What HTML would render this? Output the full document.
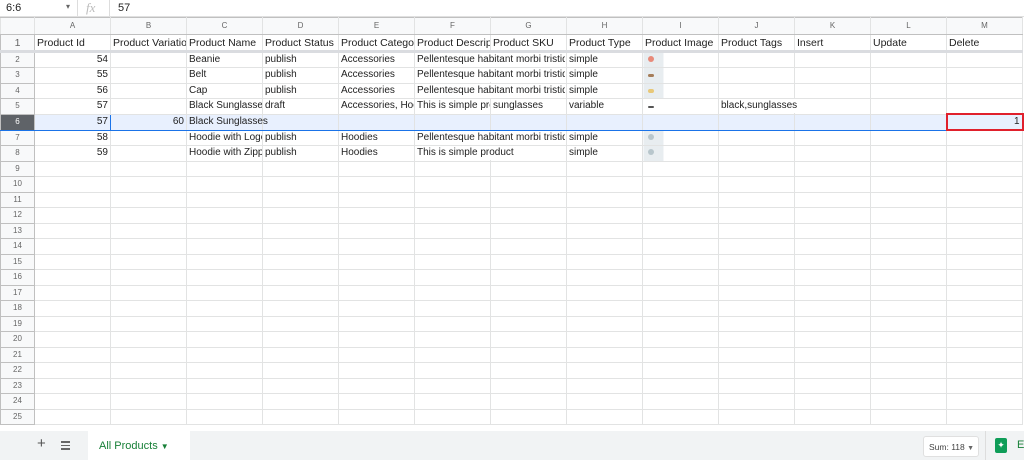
<!DOCTYPE html><html><head><style>
*{box-sizing:border-box;margin:0;padding:0}
body{width:1024px;height:460px;overflow:hidden;background:#fff;font-family:"Liberation Sans",Arial,sans-serif;position:relative}
.fb{position:absolute;left:0;top:0;width:1024px;height:17px;border-bottom:1px solid #e0e0e0;font-size:11px;color:#222}
table{position:absolute;top:17px;left:0;width:1022px;border-collapse:collapse;table-layout:fixed;font-size:10px;color:#222}
td{border:1px solid #e2e3e3;white-space:nowrap;overflow:hidden;padding:0 2px;height:15.5px;line-height:14px}
td.rh{background:#f8f9fa;color:#666;text-align:center;font-size:8px;border-color:#c0c0c0;border-top-color:#e2e3e3}
tr.ch td{background:#f8f9fa;color:#666;text-align:center;font-size:8px;height:17px;border-color:#c0c0c0 #e2e3e3}
tr.r1 td{height:17px;font-size:10.5px;border-bottom:3px solid #dadce0}
.n{text-align:right}
.img{background:linear-gradient(90deg,#e8edf0 0,#e8edf0 20px,#fff 20px)}
tr.sel td{background:#e8f0fe;border-top:1px solid #1a73e8;border-bottom:1px solid #1a73e8}
tr.sel td.rh{background:#5f6368;color:#fff}
.dot{display:inline-block;width:6px;height:6px;border-radius:3px;margin-left:3px}
.bot{position:absolute;left:0;top:431px;width:1024px;height:29px;background:#f1f3f4}
td.ov{overflow:visible}
td.ov span{display:block;width:148px;overflow:hidden;position:relative;background:#fff}
td.nb{border-left-color:#fff}
</style></head><body>
<div class="fb"><span style="position:absolute;left:6px;top:2px">6:6</span><span style="position:absolute;left:66px;top:2px;font-size:8px;color:#666">▾</span><span style="position:absolute;left:77px;top:0;width:1px;height:16px;background:#ddd"></span><span style="position:absolute;left:86px;top:0;font-family:'Liberation Serif';font-style:italic;color:#bbb;font-size:13px">fx</span><span style="position:absolute;left:109px;top:0;width:1px;height:16px;background:#ddd"></span><span style="position:absolute;left:118px;top:2px">57</span></div>
<table>
<colgroup><col style="width:34px"><col style="width:76px"><col style="width:76px"><col style="width:76px"><col style="width:76px"><col style="width:76px"><col style="width:76px"><col style="width:76px"><col style="width:76px"><col style="width:76px"><col style="width:76px"><col style="width:76px"><col style="width:76px"><col style="width:76px"></colgroup>
<tr class="ch"><td></td><td>A</td><td>B</td><td>C</td><td>D</td><td>E</td><td>F</td><td>G</td><td>H</td><td>I</td><td>J</td><td>K</td><td>L</td><td>M</td></tr>
<tr class="r1"><td class="rh">1</td><td>Product Id</td><td>Product Variation</td><td>Product Name</td><td>Product Status</td><td>Product Category</td><td>Product Description</td><td>Product SKU</td><td>Product Type</td><td>Product Image</td><td>Product Tags</td><td>Insert</td><td>Update</td><td>Delete</td></tr>
<tr><td class="rh">2</td><td class="n">54</td><td></td><td>Beanie</td><td>publish</td><td>Accessories</td><td class="ov"><span>Pellentesque habitant morbi tristique</span></td><td class="nb"></td><td>simple</td><td class="img"><span class="dot" style="background:#e88a7a"></span></td><td></td><td></td><td></td><td></td></tr>
<tr><td class="rh">3</td><td class="n">55</td><td></td><td>Belt</td><td>publish</td><td>Accessories</td><td class="ov"><span>Pellentesque habitant morbi tristique</span></td><td class="nb"></td><td>simple</td><td class="img"><span class="dot" style="background:#a57d5a;height:3px"></span></td><td></td><td></td><td></td><td></td></tr>
<tr><td class="rh">4</td><td class="n">56</td><td></td><td>Cap</td><td>publish</td><td>Accessories</td><td class="ov"><span>Pellentesque habitant morbi tristique</span></td><td class="nb"></td><td>simple</td><td class="img"><span class="dot" style="background:#e8c878;height:4px"></span></td><td></td><td></td><td></td><td></td></tr>
<tr><td class="rh">5</td><td class="n">57</td><td></td><td>Black Sunglasses</td><td>draft</td><td>Accessories, Hoodies</td><td>This is simple product</td><td>sunglasses</td><td>variable</td><td><span class="dot" style="background:#555;height:2px"></span></td><td class="ov"><span>black,sunglasses</span></td><td class="nb"></td><td></td><td></td></tr>
<tr class="sel"><td class="rh">6</td><td class="n" style="border:1px solid #1a73e8">57</td><td class="n">60</td><td style="overflow:visible">Black Sunglasses</td><td></td><td></td><td></td><td></td><td></td><td></td><td></td><td></td><td></td><td class="n" style="border:2px solid #e0202c;outline:1px solid #e0202c">1</td></tr>
<tr><td class="rh">7</td><td class="n">58</td><td></td><td>Hoodie with Logo</td><td>publish</td><td>Hoodies</td><td class="ov"><span>Pellentesque habitant morbi tristique</span></td><td class="nb"></td><td>simple</td><td class="img"><span class="dot" style="background:#b8c6cc"></span></td><td></td><td></td><td></td><td></td></tr>
<tr><td class="rh">8</td><td class="n">59</td><td></td><td>Hoodie with Zipper</td><td>publish</td><td>Hoodies</td><td class="ov"><span>This is simple product</span></td><td class="nb"></td><td>simple</td><td class="img"><span class="dot" style="background:#b8c6cc"></span></td><td></td><td></td><td></td><td></td></tr>
<tr><td class="rh">9</td><td></td><td></td><td></td><td></td><td></td><td></td><td></td><td></td><td></td><td></td><td></td><td></td><td></td></tr>
<tr><td class="rh">10</td><td></td><td></td><td></td><td></td><td></td><td></td><td></td><td></td><td></td><td></td><td></td><td></td><td></td></tr>
<tr><td class="rh">11</td><td></td><td></td><td></td><td></td><td></td><td></td><td></td><td></td><td></td><td></td><td></td><td></td><td></td></tr>
<tr><td class="rh">12</td><td></td><td></td><td></td><td></td><td></td><td></td><td></td><td></td><td></td><td></td><td></td><td></td><td></td></tr>
<tr><td class="rh">13</td><td></td><td></td><td></td><td></td><td></td><td></td><td></td><td></td><td></td><td></td><td></td><td></td><td></td></tr>
<tr><td class="rh">14</td><td></td><td></td><td></td><td></td><td></td><td></td><td></td><td></td><td></td><td></td><td></td><td></td><td></td></tr>
<tr><td class="rh">15</td><td></td><td></td><td></td><td></td><td></td><td></td><td></td><td></td><td></td><td></td><td></td><td></td><td></td></tr>
<tr><td class="rh">16</td><td></td><td></td><td></td><td></td><td></td><td></td><td></td><td></td><td></td><td></td><td></td><td></td><td></td></tr>
<tr><td class="rh">17</td><td></td><td></td><td></td><td></td><td></td><td></td><td></td><td></td><td></td><td></td><td></td><td></td><td></td></tr>
<tr><td class="rh">18</td><td></td><td></td><td></td><td></td><td></td><td></td><td></td><td></td><td></td><td></td><td></td><td></td><td></td></tr>
<tr><td class="rh">19</td><td></td><td></td><td></td><td></td><td></td><td></td><td></td><td></td><td></td><td></td><td></td><td></td><td></td></tr>
<tr><td class="rh">20</td><td></td><td></td><td></td><td></td><td></td><td></td><td></td><td></td><td></td><td></td><td></td><td></td><td></td></tr>
<tr><td class="rh">21</td><td></td><td></td><td></td><td></td><td></td><td></td><td></td><td></td><td></td><td></td><td></td><td></td><td></td></tr>
<tr><td class="rh">22</td><td></td><td></td><td></td><td></td><td></td><td></td><td></td><td></td><td></td><td></td><td></td><td></td><td></td></tr>
<tr><td class="rh">23</td><td></td><td></td><td></td><td></td><td></td><td></td><td></td><td></td><td></td><td></td><td></td><td></td><td></td></tr>
<tr><td class="rh">24</td><td></td><td></td><td></td><td></td><td></td><td></td><td></td><td></td><td></td><td></td><td></td><td></td><td></td></tr>
<tr><td class="rh">25</td><td></td><td></td><td></td><td></td><td></td><td></td><td></td><td></td><td></td><td></td><td></td><td></td><td></td></tr>
</table>
<div class="bot">
<span style="position:absolute;left:37px;top:4px;font-size:15px;color:#555">+</span>
<span style="position:absolute;left:61px;top:10px;width:9px;height:9px;border-top:2px solid #666;border-bottom:2px solid #666"><span style="position:absolute;left:0;top:2px;width:9px;height:1px;background:#666"></span></span>
<div style="position:absolute;left:88px;top:0;width:102px;height:29px;background:#fff;color:#188038;font-size:11px;padding:9px 0 0 11px">All Products <span style="font-size:8px">▼</span></div>
<div style="position:absolute;left:923px;top:5px;width:56px;height:21px;background:#fff;border:1px solid #e0e0e0;border-radius:3px;font-size:8.5px;color:#444;padding:5px 0 0 5px">Sum: 118 <span style="font-size:7px;color:#666">▼</span></div>
<div style="position:absolute;left:985px;top:0;width:1px;height:29px;background:#ddd"></div>
<div style="position:absolute;left:995px;top:7px;width:12px;height:15px;background:#0f9d58;border-radius:2px;color:#fff;font-size:9px;text-align:center;line-height:15px">✦</div>
<span style="position:absolute;left:1017px;top:8px;font-size:11px;color:#188038">E</span>
</div>
</body></html>
